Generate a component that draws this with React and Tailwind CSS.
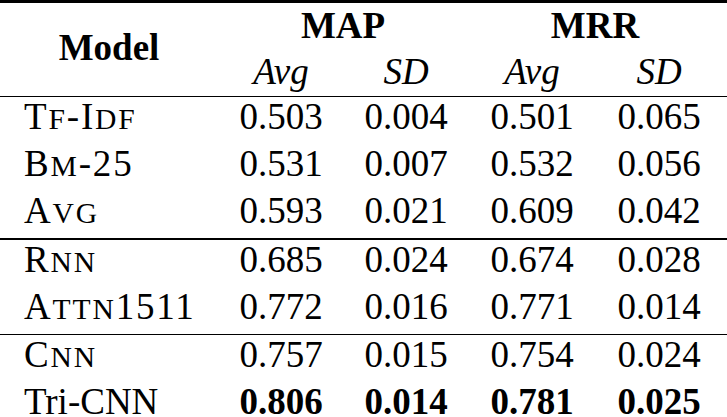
const groups = [
  [
    { name: 'Tf-Idf', sc: true, vals: ['0.503', '0.004', '0.501', '0.065'] },
    { name: 'Bm-25', sc: true, vals: ['0.531', '0.007', '0.532', '0.056'] },
    { name: 'Avg', sc: true, vals: ['0.593', '0.021', '0.609', '0.042'] },
  ],
  [
    { name: 'Rnn', sc: true, vals: ['0.685', '0.024', '0.674', '0.028'] },
    { name: 'Attn1511', sc: true, vals: ['0.772', '0.016', '0.771', '0.014'] },
  ],
  [
    { name: 'Cnn', sc: true, vals: ['0.757', '0.015', '0.754', '0.024'] },
    { name: 'Tri-CNN', sc: false, bold: true, vals: ['0.806', '0.014', '0.781', '0.025'] },
  ],
];

const cols = 'grid grid-cols-[218px_126px_124px_128px_126px]';

// small caps like LaTeX \textsc: lowercase runs become smaller capitals
function SmallCaps({ text }) {
  const parts = text.match(/[a-z]+|[^a-z]+/g);
  return (
    <span className="tracking-[0.05em]">
      {parts.map((p, i) =>
        /[a-z]/.test(p) ? (
          <span key={i} className="text-[0.8em]">
            {p.toUpperCase()}
          </span>
        ) : (
          <span key={i}>{p}</span>
        )
      )}
    </span>
  );
}

function Row({ row }) {
  return (
    <div className={`${cols} h-[47px] leading-[39px]`}>
      <div className="pl-[24px] whitespace-nowrap">
        {row.sc ? <SmallCaps text={row.name} /> : row.name}
      </div>
      {row.vals.map((v, i) => (
        <div key={i} className={`text-center ${row.bold ? 'font-bold' : ''}`}>
          {v}
        </div>
      ))}
    </div>
  );
}

export default function App() {
  return (
    <div
      className="w-[727px] h-[417px] overflow-hidden bg-white text-black text-[37px]"
      style={{ fontFamily: '"Liberation Serif", "Times New Roman", serif' }}
    >
      <div className="h-[2.5px] bg-black" />
      {/* header */}
      <div className={`${cols} grid-rows-[46px_47px]`}>
        <div className="row-span-2 flex items-center justify-center font-bold pb-[2px]">Model</div>
        <div className="col-span-2 text-center font-bold leading-[46px]">MAP</div>
        <div className="col-span-2 text-center font-bold leading-[46px]">MRR</div>
        <div className="text-center italic leading-[46px]">Avg</div>
        <div className="text-center italic leading-[46px]">SD</div>
        <div className="text-center italic leading-[46px]">Avg</div>
        <div className="text-center italic leading-[46px]">SD</div>
      </div>
      {groups.map((g, gi) => (
        <div key={gi}>
          <div className="h-[1.5px] bg-black" />
          {g.map((r) => (
            <Row key={r.name} row={r} />
          ))}
        </div>
      ))}
    </div>
  );
}
